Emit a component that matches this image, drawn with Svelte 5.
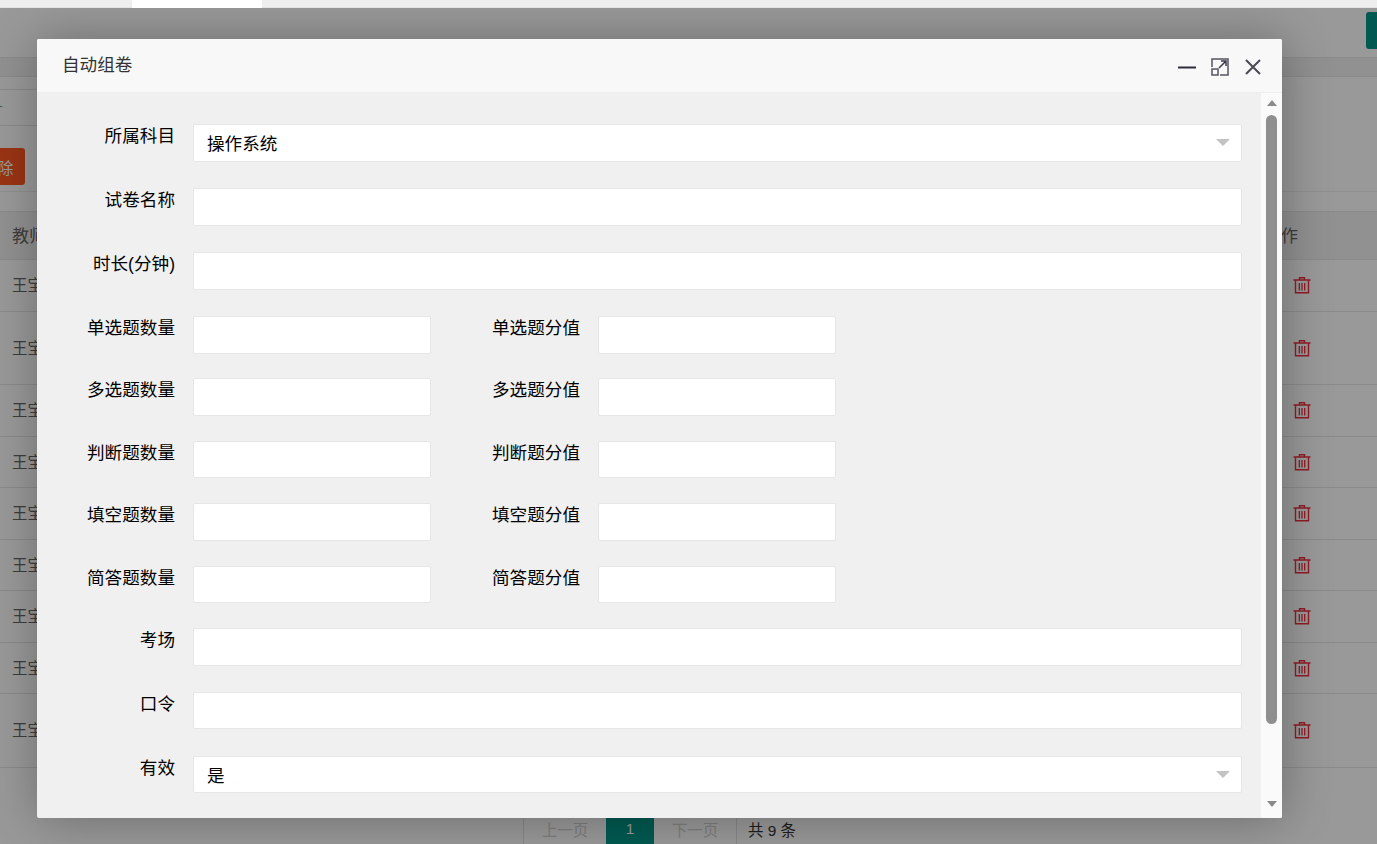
<script lang="ts">
  const rows = [false, true, false, false, false, false, false, false, true];
  const kinds = ["单选题", "多选题", "判断题", "填空题", "简答题"];
</script>

<div class="tabs"><span class="tab"></span></div>

<div class="frame">
  <div class="page">
    <div class="toolbar"><span class="add"></span></div>
    <div class="band"></div>
    <div class="filter"><div class="field">-</div></div>
    <div class="actions"><button class="danger">删除</button></div>
    <div class="table">
      <div class="row head"><span class="cell">教师</span><span class="ops">操作</span></div>
      {#each rows as tall}
        <div class="row" class:tall>
          <span class="cell">王宝</span>
          <span class="ops">
            <svg class="edit" width="18" height="18" viewBox="0 0 18 18"><path d="M2 16l1-4L13 2l3 3L6 15z" fill="none" stroke="#009688" stroke-width="1.5" /></svg>
            <svg width="18" height="18" viewBox="0 0 18 18" fill="none" stroke="#ee2e3e" stroke-width="1.4">
              <path d="M0.5 4h17M6.5 3.6V1.7h5v1.9" />
              <path d="M2.5 4.2v12.6h13V4.2" />
              <path d="M6.3 7v7.4M9 7v7.4M11.7 7v7.4" stroke-width="1.3" />
            </svg>
          </span>
        </div>
      {/each}
    </div>
    <div class="pager">
      <span class="pg off">上一页</span>
      <span class="pg cur">1</span>
      <span class="pg off">下一页</span>
      <span class="total">共 9 条</span>
    </div>
  </div>

  <div class="shade"></div>

  <div class="modal">
    <div class="title">
      <span class="name">自动组卷</span>
      <div class="controls">
        <svg width="18" height="18" viewBox="0 0 18 18"><path d="M0 9.5h18" stroke="#2e2d3c" stroke-width="2" /></svg>
        <svg width="18" height="18" viewBox="0 0 18 18" fill="none" stroke="#55545f" stroke-width="1.5">
          <path d="M1 9V1h16v16H9" />
          <rect x="1" y="11" width="6" height="6" />
          <path d="M8 10l7-7M10 3h5v5" stroke="#3a3947" />
        </svg>
        <svg width="18" height="18" viewBox="0 0 18 18"><path d="M2 2l14 14M16 2L2 16" stroke="#4a4956" stroke-width="2" /></svg>
      </div>
    </div>
    <div class="body">
      <form class="form">
        <div class="item">
          <span class="label">所属科目</span>
          <div class="select"><input readonly value="操作系统" /><i></i></div>
        </div>
        <div class="item">
          <span class="label">试卷名称</span>
          <input />
        </div>
        <div class="item">
          <span class="label">时长(分钟)</span>
          <input />
        </div>
        {#each kinds as k}
          <div class="item half">
            <span class="label">{k}数量</span>
            <input class="short" />
            <span class="label second">{k}分值</span>
            <input class="short" />
          </div>
        {/each}
        <div class="item">
          <span class="label">考场</span>
          <input />
        </div>
        <div class="item">
          <span class="label">口令</span>
          <input />
        </div>
        <div class="item">
          <span class="label">有效</span>
          <div class="select"><input readonly value="是" /><i></i></div>
        </div>
      </form>
      <div class="scroll">
        <b class="up"></b>
        <span class="thumb"></span>
        <b class="down"></b>
      </div>
    </div>
  </div>
</div>

<style>
  :global(body) {
    margin: 0;
    height: 844px;
    overflow: hidden;
    background: #fff;
    font-family: "Liberation Sans", "Noto Sans CJK SC", sans-serif;
  }
  .tabs {
    height: 8px;
    background: #eee;
    border-bottom: 1px solid #e2e2e2;
    box-sizing: border-box;
  }
  .tab {
    display: block;
    width: 130px;
    height: 9px;
    margin-left: 132px;
    background: #fff;
  }
  .frame {
    position: relative;
    height: 836px;
    overflow: hidden;
  }
  .toolbar {
    height: 49px;
    display: flex;
    justify-content: flex-end;
    align-items: flex-start;
    padding-top: 4px;
    box-sizing: border-box;
  }
  .add {
    width: 30px;
    height: 37px;
    margin-right: -19px;
    background: #009688;
    border-radius: 3px;
  }
  .band {
    height: 20px;
    background: #f2f2f2;
    border-top: 1px solid #e6e6e6;
    border-bottom: 1px solid #e6e6e6;
    box-sizing: border-box;
  }
  .filter {
    height: 49px;
    padding-top: 12px;
    box-sizing: border-box;
  }
  .field {
    width: 60px;
    height: 37px;
    border-top: 1px solid #e6e6e6;
    border-bottom: 1px solid #e6e6e6;
    box-sizing: border-box;
    color: #5f8f8a;
    font-size: 11px;
    line-height: 30px;
    text-indent: -1px;
  }
  .actions {
    height: 66px;
    padding-top: 22px;
    box-sizing: border-box;
    border-bottom: 1px solid #eee;
  }
  .danger {
    display: block;
    width: 54px;
    height: 37px;
    margin-left: -29px;
    padding: 0;
    border: 0;
    border-radius: 3px;
    background: #ff5722;
    color: #fff;
    font: 15.4px "Liberation Sans", "Noto Sans CJK SC", sans-serif;
  }
  .table {
    margin-top: 19px;
    border-top: 1px solid #e6e6e6;
  }
  .row {
    height: 51.5px;
    display: flex;
    align-items: center;
    justify-content: space-between;
    padding-left: 12px;
    box-sizing: border-box;
    border-bottom: 1px solid #e6e6e6;
    color: #666;
    font-size: 15.4px;
  }
  .row.tall {
    height: 73.5px;
  }
  .row.head {
    height: 48px;
    background: #f2f2f2;
    font-size: 17px;
  }
  .cell {
    padding-bottom: 2px;
  }
  .ops {
    width: 113px;
    display: flex;
    align-items: center;
    gap: 11px;
  }
  .head .ops {
    padding-bottom: 2px;
  }
  .pager {
    display: flex;
    align-items: center;
    height: 48px;
    margin: 37px 0 0 523px;
    color: #333;
    font-size: 15.4px;
  }
  .pg {
    height: 100%;
    display: flex;
    align-items: center;
    justify-content: center;
    box-sizing: border-box;
  }
  .off {
    width: 83px;
    color: #d2d2d2;
    border-left: 1px solid #e2e2e2;
  }
  .cur {
    width: 48px;
    background: #009688;
    color: #fff;
  }
  .cur + .off {
    width: 82px;
    border-left: 0;
  }
  .total {
    height: 100%;
    display: flex;
    align-items: center;
    padding-left: 11px;
    border-left: 1px solid #e2e2e2;
  }
  .shade {
    position: absolute;
    inset: 0;
    background: rgba(0, 0, 0, 0.4);
  }
  .modal {
    position: absolute;
    left: 37px;
    top: 31px;
    width: 1245px;
    height: 779px;
    display: flex;
    flex-direction: column;
    background: #f0f0f0;
    border-radius: 2px;
    box-shadow: 1px 1px 50px rgba(0, 0, 0, 0.3);
    overflow: hidden;
  }
  .title {
    height: 54px;
    flex: none;
    display: flex;
    align-items: center;
    justify-content: space-between;
    padding: 0 20px 0 25px;
    box-sizing: border-box;
    background: #f8f8f8;
    border-bottom: 1px solid #eee;
    color: #333;
    font-size: 17.6px;
  }
  .name {
    padding-bottom: 4px;
  }
  .controls {
    display: flex;
    gap: 15px;
    margin-top: 3px;
  }
  .body {
    flex: 1;
    display: flex;
    min-height: 0;
  }
  .form {
    flex: 1;
    padding: 31px 19px 0 0;
    display: flex;
    flex-direction: column;
  }
  .item {
    display: flex;
    align-items: flex-start;
    margin-bottom: 26.4px;
  }
  .item.half {
    margin-bottom: 24.8px;
  }
  .label {
    width: 138px;
    margin-right: 18px;
    flex: none;
    text-align: right;
    color: #000;
    font-size: 17.6px;
    line-height: 24px;
  }
  .label.second {
    width: 149px;
    margin-right: 18px;
  }
  input {
    flex: 1;
    min-width: 0;
    height: 37.6px;
    padding: 0 13px;
    box-sizing: border-box;
    border: 1px solid #e6e6e6;
    border-radius: 2px;
    outline: 0;
    background: #fff;
    color: #000;
    font: 17.6px "Liberation Sans", "Noto Sans CJK SC", sans-serif;
  }
  input.short {
    flex: none;
    width: 238px;
  }
  .select {
    flex: 1;
    display: flex;
    position: relative;
  }
  .select i {
    position: absolute;
    right: 12px;
    top: 15px;
    border: 7px solid transparent;
    border-top: 7px solid #c2c2c2;
    border-bottom: 0;
  }
  .scroll {
    width: 21px;
    flex: none;
    display: flex;
    flex-direction: column;
    align-items: center;
    background: #fafafa;
  }
  .up,
  .down {
    flex: none;
    border: 5.5px solid transparent;
    border-top: 0;
    border-bottom: 6px solid #8a8a8a;
  }
  .up {
    margin-top: 7px;
  }
  .down {
    margin-top: 77px;
    border-bottom: 0;
    border-top: 6px solid #8a8a8a;
  }
  .thumb {
    width: 11px;
    height: 609px;
    margin-top: 9px;
    flex: none;
    border-radius: 6px;
    background: #8f8f8f;
  }
</style>
